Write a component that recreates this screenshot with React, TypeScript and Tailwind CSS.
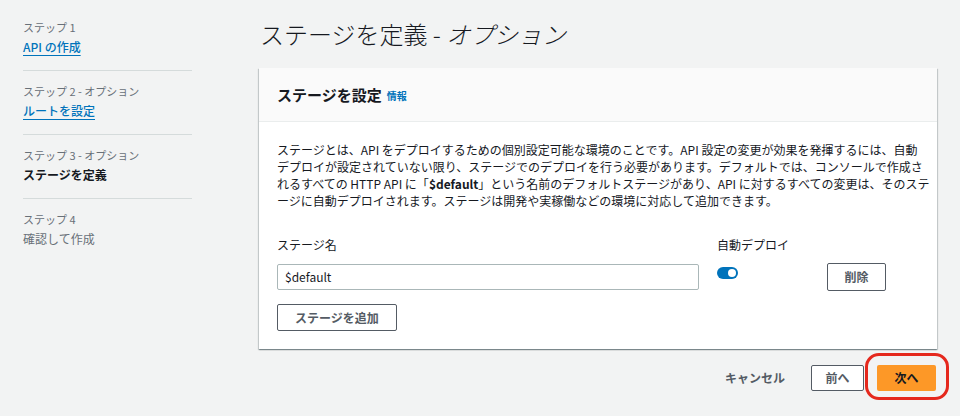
import React from "react";

const font = { fontFamily: '"Noto Sans CJK JP", "Noto Sans", sans-serif' };

function Step({ label, children, first }: { label: string; children: React.ReactNode; first?: boolean }) {
  return (
    <div className={`${first ? "pt-[19px]" : "pt-[12px]"} pb-[15px] border-b border-[#d5dbdb]`}>
      <div className="text-[11px] leading-[16px] text-[#687078]">{label}</div>
      <div className="mt-[4px] text-[12px] leading-[16px]">{children}</div>
    </div>
  );
}

export default function App() {
  return (
    <div className="w-[960px] h-[416px] bg-[#f2f3f3] flex overflow-hidden text-[#16191f]" style={font}>
      <nav className="ml-[23px] w-[169px] shrink-0">
        <Step label="ステップ 1" first>
          <span className="text-[#0073bb] font-medium underline underline-offset-[3px]">API の作成</span>
        </Step>
        <Step label="ステップ 2 - オプション">
          <span className="text-[#0073bb] font-medium underline underline-offset-[3px]">ルートを設定</span>
        </Step>
        <Step label="ステップ 3 - オプション">
          <span className="font-bold text-[#16191f]">ステージを定義</span>
        </Step>
        <div className="pt-[12px]">
          <div className="text-[11px] leading-[16px] text-[#687078]">ステップ 4</div>
          <div className="mt-[4px] text-[12px] leading-[16px] text-[#687078]">確認して作成</div>
        </div>
      </nav>

      <main className="ml-[67px] w-[678px] shrink-0 pt-[18px]">
        <h1 className="text-[24px] leading-[32px] font-light text-[#16191f] pl-[1px]">
          ステージを定義 - <span className="italic">オプション</span>
        </h1>

        <section className="mt-[18px] bg-white shadow-[0_1px_1px_0_rgba(0,28,36,0.3),1px_1px_1px_0_rgba(0,28,36,0.15),-1px_1px_1px_0_rgba(0,28,36,0.15)]">
          <div className="h-[54px] bg-[#fafafa] border-b border-[#eaeded] px-[18px] flex items-center">
            <span className="text-[15px] font-bold leading-[20px]">ステージを設定</span>
            <span className="ml-[5px] text-[10px] font-bold text-[#0073bb] leading-[20px] mt-[2px]">情報</span>
          </div>
          <div className="px-[18px] pt-[19px] pb-[18px]">
            <p className="text-[12px] leading-[17px] text-[#16191f] whitespace-nowrap">
              ステージとは、API をデプロイするための個別設定可能な環境のことです。API 設定の変更が効果を発揮するには、自動
              <br />
              デプロイが設定されていない限り、ステージでのデプロイを行う必要があります。デフォルトでは、コンソールで作成さ
              <br />
              れるすべての HTTP API に「<span className="font-bold">$default</span>」という名前のデフォルトステージがあり、API に対するすべての変更は、そのステ
              <br />
              ージに自動デプロイされます。ステージは開発や実稼働などの環境に対応して追加できます。
            </p>

            <div className="mt-[27px] flex">
              <div className="w-[422px]">
                <div className="text-[12px] leading-[17px]">ステージ名</div>
                <div className="mt-[11px] h-[26px] border border-[#aab7b8] rounded-[2px] flex items-center px-[7px] text-[12px]">
                  $default
                </div>
              </div>
              <div className="ml-[18px] w-[110px]">
                <div className="text-[12px] leading-[17px]">自動デプロイ</div>
                <div className="mt-[14px] w-[21px] h-[12px] rounded-full bg-[#0073bb] relative">
                  <div className="absolute right-[2px] top-[2px] w-[8px] h-[8px] rounded-full bg-white" />
                </div>
              </div>
              <div className="pt-[27px]">
                <div className="w-[59px] h-[28px] border border-[#545b64] rounded-[2px] bg-white flex items-center justify-center text-[12px] font-bold text-[#545b64]">
                  削除
                </div>
              </div>
            </div>

            <div className="mt-[13px] w-[120px] h-[27px] border border-[#545b64] rounded-[2px] bg-white flex items-center justify-center text-[12px] font-bold text-[#545b64]">
              ステージを追加
            </div>
          </div>
        </section>

        <div className="mt-[16px] flex items-center justify-end pr-[1px]">
          <span className="text-[12px] font-bold text-[#545b64]">キャンセル</span>
          <div className="ml-[26px] w-[53px] h-[26px] border border-[#545b64] rounded-[2px] bg-white flex items-center justify-center text-[12px] font-bold text-[#545b64]">
            前へ
          </div>
          <div className="ml-[13px] relative">
            <div className="w-[59px] h-[26px] rounded-[2px] bg-[#fd9827] flex items-center justify-center text-[12px] font-bold text-[#16191f]">
              次へ
            </div>
            <div className="absolute -left-[12px] -top-[12px] w-[84px] h-[47px] border-[3px] border-[#e5281d] rounded-[14px]" />
          </div>
        </div>
      </main>
    </div>
  );
}
